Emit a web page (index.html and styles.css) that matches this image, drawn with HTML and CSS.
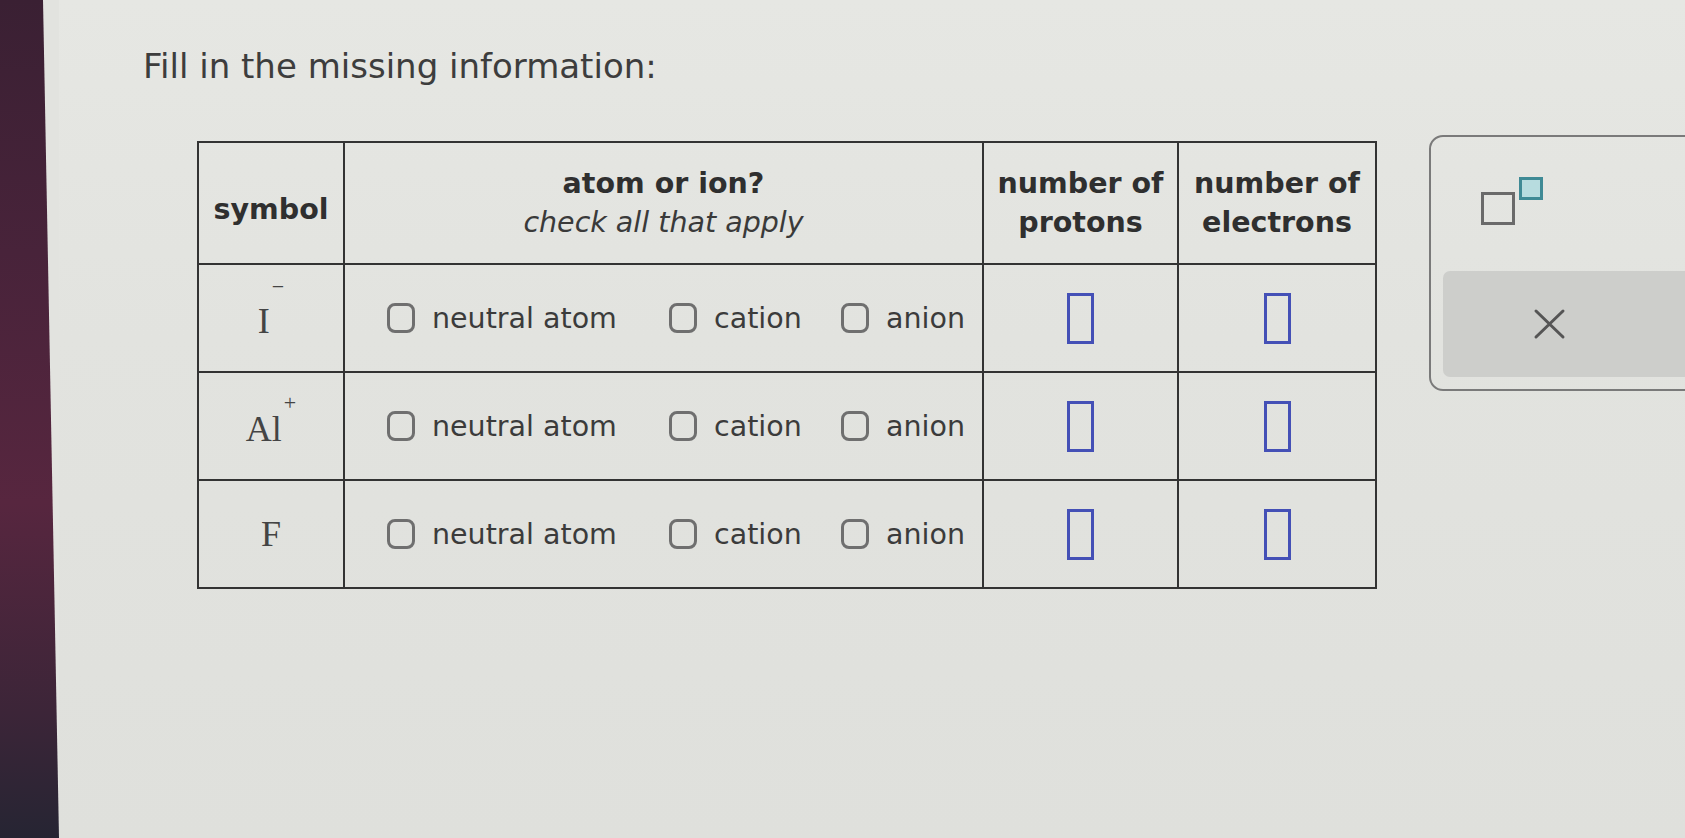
FILE: index.html
```html
<!DOCTYPE html>
<html lang="en">
<head>
<meta charset="utf-8">
<title>Fill in the missing information</title>
<link rel="stylesheet" href="styles.css">
</head>
<body>
<div class="screen">
  <div class="bezel"></div>
  <main class="page">
    <h1 class="prompt">Fill in the missing information:</h1>
    <div class="workarea">
      <table class="ions">
        <colgroup>
          <col class="c-sym"><col class="c-kind"><col class="c-num"><col class="c-num2">
        </colgroup>
        <thead>
          <tr>
            <th class="h-sym">symbol</th>
            <th>atom or ion?<br><span class="hint">check all that apply</span></th>
            <th>number of<br>protons</th>
            <th>number of<br>electrons</th>
          </tr>
        </thead>
        <tbody>
          <tr>
            <td class="sym neg">I<span class="chg minus">−</span></td>
            <td class="kinds">
              <div class="opts">
                <label class="opt"><span class="box"></span>neutral atom</label>
                <label class="opt"><span class="box"></span>cation</label>
                <label class="opt"><span class="box"></span>anion</label>
              </div>
            </td>
            <td class="num"><span class="answer"></span></td>
            <td class="num"><span class="answer"></span></td>
          </tr>
          <tr>
            <td class="sym pos">Al<span class="chg plus">+</span></td>
            <td class="kinds">
              <div class="opts">
                <label class="opt"><span class="box"></span>neutral atom</label>
                <label class="opt"><span class="box"></span>cation</label>
                <label class="opt"><span class="box"></span>anion</label>
              </div>
            </td>
            <td class="num"><span class="answer"></span></td>
            <td class="num"><span class="answer"></span></td>
          </tr>
          <tr>
            <td class="sym">F</td>
            <td class="kinds">
              <div class="opts">
                <label class="opt"><span class="box"></span>neutral atom</label>
                <label class="opt"><span class="box"></span>cation</label>
                <label class="opt"><span class="box"></span>anion</label>
              </div>
            </td>
            <td class="num"><span class="answer"></span></td>
            <td class="num"><span class="answer"></span></td>
          </tr>
        </tbody>
      </table>
      <aside class="tools">
        <div class="tool-icons">
          <span class="sup-icon"><span class="base-box"></span><span class="exp-box"></span></span>
        </div>
        <button class="clear-btn" type="button" aria-label="clear">
          <svg width="33" height="32" viewBox="0 0 33 32"><path d="M3 3 L30 29 M30 3 L3 29" stroke="#555" stroke-width="3" stroke-linecap="round" fill="none"/></svg>
        </button>
      </aside>
    </div>
  </main>
</div>
</body>
</html>
```
FILE: styles.css
```css
html, body {
  margin: 0;
  padding: 0;
}
body {
  background: #e2e3df;
  overflow: hidden;
  font-family: "DejaVu Sans", Verdana, sans-serif;
  color: #3a3a3a;
}
.screen {
  display: flex;
  height: 838px;
  width: 1685px;
}
.bezel {
  flex: 0 0 59px;
  clip-path: polygon(0 0, 43px 0, 59px 100%, 0 100%);
  background: linear-gradient(180deg, #3a2033 0%, #48233a 30%, #57263f 60%, #3c2538 85%, #262533 100%);
}
.page {
  flex: 1;
  padding-left: 84px;
  background: linear-gradient(180deg, #e6e7e3 0%, #e2e3df 40%, #dfe0dc 100%);
}
.prompt {
  margin: 0;
  padding-top: 46px;
  font-size: 34px;
  line-height: 40px;
  font-weight: normal;
  color: #3d3d3d;
}
.workarea {
  display: flex;
  align-items: flex-start;
  gap: 52px;
  margin-top: 55px;
  margin-left: 54px;
}
.ions {
  flex: 0 0 auto;
  border-collapse: collapse;
  table-layout: fixed;
  width: 1178px;
  border: 2px solid #333;
  font-size: 28.5px;
}
.c-sym { width: 146px; }
.c-kind { width: 639px; }
.c-num { width: 195px; }
.c-num2 { width: 198px; }
.ions th, .ions td {
  border: 2px solid #333;
  padding: 0;
  text-align: center;
  vertical-align: middle;
}
.ions th {
  height: 120px;
  font-weight: bold;
  line-height: 39px;
  color: #2f2f2f;
}
.ions th.h-sym {
  height: 108px;
  padding-top: 12px;
}
.hint {
  font-weight: normal;
  font-style: italic;
  color: #3a3a3a;
}
.ions td {
  height: 106px;
}
.sym {
  font-family: "Liberation Serif", "Times New Roman", serif;
  font-size: 36px;
  color: #444;
}
.chg {
  font-size: 22px;
  line-height: 0;
  margin-left: 2px;
}
.chg.minus {
  vertical-align: 39px;
}
.chg.plus {
  vertical-align: 31px;
}
.ions td.sym.neg {
  height: 98px;
  padding-bottom: 8px;
}
.ions td.sym.pos {
  height: 106px;
  padding-bottom: 0;
}
.ions td.kinds {
  text-align: left;
  padding-left: 42px;
}
.opts {
  display: grid;
  grid-template-columns: 282px 172px auto;
  align-items: center;
  color: #3b3b3b;
}
.opt {
  display: flex;
  align-items: center;
  gap: 17px;
}
.box {
  flex: 0 0 auto;
  width: 28px;
  height: 30px;
  box-sizing: border-box;
  border: 3px solid #6f6f6f;
  border-radius: 8px;
}
.answer {
  display: inline-block;
  vertical-align: middle;
  width: 27px;
  height: 51px;
  box-sizing: border-box;
  border: 3px solid #4450b6;
}
.tools {
  flex: 0 0 auto;
  width: 300px;
  height: 256px;
  margin-top: -6px;
  box-sizing: border-box;
  border: 2px solid #7a7a7a;
  border-radius: 14px;
  padding: 0 0 12px 12px;
  display: flex;
  flex-direction: column;
}
.tool-icons {
  height: 134px;
  box-sizing: border-box;
  padding-top: 40px;
  padding-left: 38px;
}
.sup-icon {
  display: flex;
  align-items: flex-start;
  gap: 4px;
}
.base-box {
  margin-top: 15px;
  width: 34px;
  height: 33px;
  box-sizing: border-box;
  border: 3px solid #6a6a6a;
}
.exp-box {
  width: 24px;
  height: 23px;
  box-sizing: border-box;
  border: 3px solid #3f8a95;
  background: #b7dcdf;
}
.clear-btn {
  flex: 1;
  display: flex;
  align-items: center;
  justify-content: flex-start;
  padding: 0 0 0 90px;
  border: none;
  border-radius: 7px;
  background: #cdcecb;
}
```
